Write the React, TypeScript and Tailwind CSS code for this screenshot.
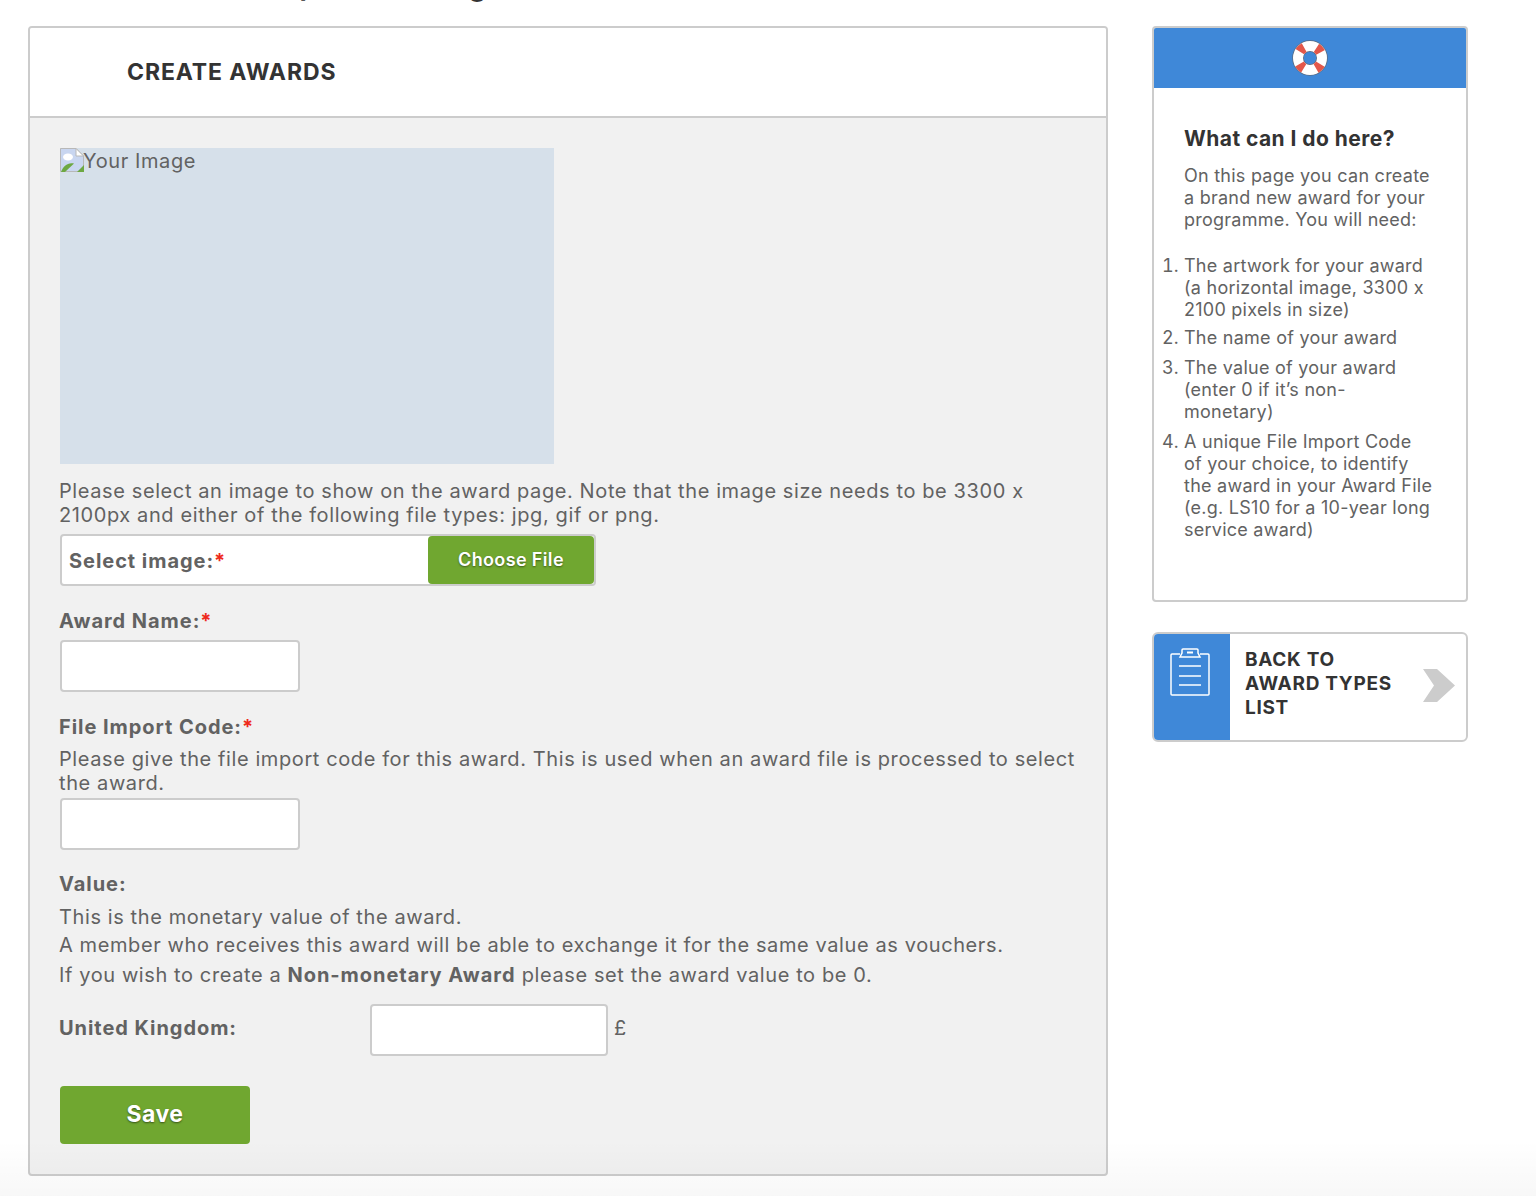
import React from "react";

const Star = () => <span className="text-[#ee2a1c]">*</span>;

function Field() {
  return <input className="block h-[52px] w-[240px] rounded-[4px] border-2 border-[#cccccc] bg-white" />;
}

export default function App() {
  return (
    <div className="relative h-[1196px] overflow-hidden bg-white font-['Inter','Liberation_Sans',sans-serif] text-[#626262] [font-feature-settings:'calt'_0]">
      <div className="h-[26px] overflow-hidden pl-[117px]">
        <div className="-mt-[34px] text-[30px] font-semibold leading-[36px] text-[#333333]">Awards Setup and Manage</div>
      </div>
      <div className="flex items-start pl-[28px]">
        <main className="h-[1150px] w-[1080px] overflow-hidden rounded-[4px] border-2 border-[#cccccc] bg-[#f1f1f1]">
          <header className="flex h-[90px] items-center border-b-2 border-[#cccccc] bg-white pl-[97px]">
            <h1 className="text-[23px] font-bold leading-[28px] tracking-[0.9px] text-[#333333]">CREATE AWARDS</h1>
          </header>
          <div className="px-[29px] pt-[30px] text-[20px] leading-[24px] tracking-[0.6px]">
            <div className="ml-px flex h-[316px] w-[494px] items-start bg-[#d6e0ea] leading-[26px]">
              <svg width="24" height="24" viewBox="0 0 24 24" className="shrink-0">
                <path d="M0.5 0.5H16L23.5 8V23.5H0.5Z" fill="#c9d6f0" stroke="#b8b8b8" />
                <path d="M16 0.5V8H23.5Z" fill="#ffffff" stroke="#b8b8b8" />
                <ellipse cx="8" cy="9" rx="5" ry="3.5" fill="#ffffff" />
                <path d="M1 24C3 18 8 14 14 15.5L5 24Z" fill="#6da842" />
                <path d="M17 24L24 17V24Z" fill="#6da842" />
              </svg>
              <span className="-ml-px">Your Image</span>
            </div>
            <p className="mt-[15px]">
              Please select an image to show on the award page. Note that the image size needs to be 3300 x 2100px and either of the following file types: jpg, gif or png.
            </p>
            <div className="ml-px mt-[7px] flex h-[52px] w-[536px] items-center justify-between rounded-[4px] border-2 border-[#cccccc] bg-white">
              <span className="pl-[7px] pt-[2px] font-bold tracking-[0.95px]">Select image:<Star /></span>
              <button className="h-[48px] w-[166px] rounded-[4px] bg-[#70a730] text-[18px] font-semibold tracking-[0.36px] text-white [text-shadow:0_1px_2px_rgba(0,0,0,0.45)]">Choose File</button>
            </div>
            <label className="mt-[23px] block font-bold tracking-[0.95px]">Award Name:<Star /></label>
            <div className="ml-px mt-[7px]"><Field /></div>
            <label className="mt-[23px] block font-bold tracking-[0.95px]">File Import Code:<Star /></label>
            <p className="mt-[8px]">
              Please give the file import code for this award. This is used when an award file is processed to select the award.
            </p>
            <div className="ml-px mt-[3px]"><Field /></div>
            <label className="mt-[22px] block font-bold tracking-[0.95px]">Value:</label>
            <p className="mt-[9px]">This is the monetary value of the award.</p>
            <p className="mt-[4px]">A member who receives this award will be able to exchange it for the same value as vouchers.</p>
            <p className="mt-[6px]">If you wish to create a <b className="font-bold tracking-[0.95px]">Non-monetary Award</b> please set the award value to be 0.</p>
            <div className="mt-[17px] flex items-center">
              <label className="-mt-[4px] w-[311px] font-bold tracking-[0.95px]">United Kingdom:</label>
              <input className="h-[52px] w-[238px] rounded-[4px] border-2 border-[#cccccc] bg-white" />
              <span className="ml-[6px] -mt-[4px]">£</span>
            </div>
            <button className="ml-px mt-[30px] h-[58px] w-[190px] rounded-[4px] bg-[#70a730] pb-[2px] text-[23px] font-bold tracking-[0.5px] text-white [text-shadow:0_1px_2px_rgba(0,0,0,0.5)]">Save</button>
          </div>
        </main>
        <aside className="ml-[44px] w-[316px]">
          <section className="h-[576px] overflow-hidden rounded-[4px] border-2 border-[#cccccc] bg-white">
            <div className="flex h-[60px] items-center justify-center bg-[#3f88d8]">
              <svg width="36" height="36" viewBox="0 0 36 36" className="blur-[0.4px]">
                <circle cx="18" cy="18" r="12" fill="none" stroke="#5b6b80" strokeWidth="11.5" />
                <circle cx="18" cy="18" r="12" fill="none" stroke="#ffffff" strokeWidth="10" />
                <circle cx="18" cy="18" r="12" fill="none" stroke="#e3574a" strokeWidth="10" strokeDasharray="6 12.85" strokeDashoffset="-6.42" />
              </svg>
            </div>
            <div className="pl-[30px] pr-[33px] pt-[38px] text-[18px] leading-[22px] tracking-[0.25px]">
              <h2 className="text-[21px] font-bold leading-[26px] tracking-[0.45px] text-[#333333]">What can I do here?</h2>
              <p className="mt-[13px]">On this page you can create a brand new award for your programme. You will need:</p>
              <ol className="mt-[24px] list-decimal">
                <li>The artwork for your award (a horizontal image, 3300 x 2100 pixels in size)</li>
                <li className="mt-[6px]">The name of your award</li>
                <li className="mt-[8px]">The value of your award (enter 0 if it’s non-monetary)</li>
                <li className="mt-[8px]">A unique File Import Code of your choice, to identify the award in your Award File (e.g. LS10 for a 10-year long service award)</li>
              </ol>
            </div>
          </section>
          <a className="mt-[30px] flex h-[110px] overflow-hidden rounded-[6px] border-2 border-[#cccccc] bg-white">
            <div className="w-[76px] shrink-0 bg-[#3f88d8] pl-[16px] pt-[14px]">
              <svg width="40" height="48" viewBox="0 0 40 48" fill="none" stroke="#ffffff" strokeWidth="1.5">
                <path d="M10 6H2Q1 6 1 7V46Q1 47 2 47H38Q39 47 39 46V7Q39 6 38 6H30" />
                <path d="M10 9L12 5V2Q12 1 13 1H27Q28 1 28 2V5L30 9Z" />
                <path d="M17 4.5H23" strokeWidth="2" />
                <path d="M9 18H31M9 28H31M9 37H31" />
              </svg>
            </div>
            <div className="w-[170px] shrink-0 self-center pb-[7px] pl-[15px] text-[19px] font-bold leading-[24px] tracking-[0.7px] text-[#333333]">BACK TO AWARD TYPES LIST</div>
            <svg width="32" height="33" viewBox="0 0 32 33" className="mb-[3px] ml-[23px] self-center" fill="#cccccc">
              <path d="M0 0H14L32 16.5L14 33H0L11 16.5Z" />
            </svg>
          </a>
        </aside>
      </div>
      <div className="pointer-events-none absolute inset-x-0 bottom-0 h-[56px] bg-gradient-to-b from-transparent to-black/[0.03]" />
    </div>
  );
}
